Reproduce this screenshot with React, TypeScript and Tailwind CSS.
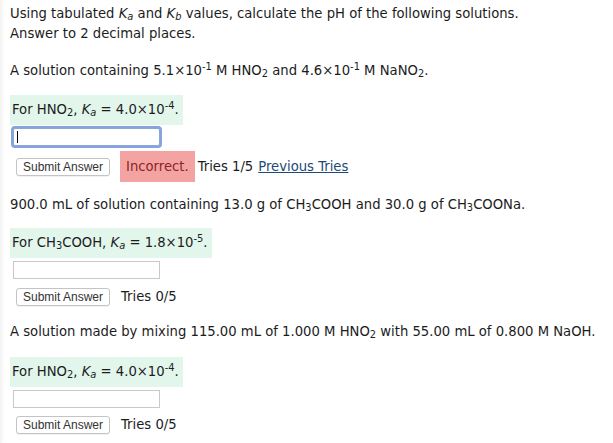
import React from "react";

const Ka = ({ sub = "a" }: { sub?: string }) => (
  <>
    <i>K</i>
    <sub>
      <i>{sub}</i>
    </sub>
  </>
);

const GivenBox = ({ children, className = "" }: { children: React.ReactNode; className?: string }) => (
  <div className={"flex " + className}>
    <div className="flex h-[30px] items-center bg-[#e2f6ec] pl-[2px] pr-[4px]">{children}</div>
  </div>
);

const AnswerInput = ({ focused = false }: { focused?: boolean }) => (
  <div className="relative mt-[3px] ml-[3px] w-[147px]">
    <input
      readOnly
      className={
        "block h-[18px] w-[147px] bg-white outline-none " +
        (focused
          ? "rounded-[2px] border border-[#8aa6dc] shadow-[0_0_0_2px_#86a3dc]"
          : "border border-[#c9c9c9]")
      }
    />
    {focused && <span className="absolute left-[4px] top-[3px] h-[12px] w-px bg-black" />}
  </div>
);

const SubmitButton = () => (
  <button className="ml-[6px] flex h-[18px] w-[94px] items-center justify-center rounded-[3px] border border-[#c4c4c4] bg-white text-[12px] text-[#333] font-['Liberation_Sans',Arial,sans-serif] shadow-[0_1px_0_rgba(0,0,0,0.05)]">
    Submit Answer
  </button>
);

export default function App() {
  return (
    <div className="min-h-[443px] bg-white pl-[10px] pt-[4px] text-[13.2px] leading-[20px] text-[#1c1c1c] font-['DejaVu_Sans',Verdana,sans-serif] shadow-[inset_4px_0_4px_-3px_rgba(0,0,0,0.08)]">
      <p>
        Using tabulated <Ka /> and <Ka sub="b" /> values, calculate the pH of the following solutions.
        <br />
        Answer to 2 decimal places.
      </p>

      {/* question 1 */}
      <p className="mt-[17px]">
        A solution containing 5.1×10<sup>-1</sup> M HNO<sub>2</sub> and 4.6×10<sup>-1</sup> M NaNO<sub>2</sub>.
      </p>
      <GivenBox className="mt-[14px]">
        <span>
          For HNO<sub>2</sub>, <Ka /> = 4.0×10<sup>-4</sup>.
        </span>
      </GivenBox>
      <AnswerInput focused />
      <div className="mt-[5px] flex h-[31px] items-center">
        <SubmitButton />
        <span className="ml-[10px] flex h-[31px] items-center bg-[#f4a3a3] px-[6px] text-[#8c2424]">Incorrect.</span>
        <span className="ml-[3px]">Tries 1/5</span>
        <a href="#" className="ml-[5px] text-[#1d4a78] underline">
          Previous Tries
        </a>
      </div>

      {/* question 2 */}
      <p className="mt-[13px]">
        900.0 mL of solution containing 13.0 g of CH<sub>3</sub>COOH and 30.0 g of CH<sub>3</sub>COONa.
      </p>
      <GivenBox className="mt-[13px]">
        <span>
          For CH<sub>3</sub>COOH, <Ka /> = 1.8×10<sup>-5</sup>.
        </span>
      </GivenBox>
      <AnswerInput />
      <div className="mt-[9px] flex h-[18px] items-center">
        <SubmitButton />
        <span className="ml-[11px]">Tries 0/5</span>
      </div>

      {/* question 3 */}
      <p className="mt-[16px]">
        A solution made by mixing 115.00 mL of 1.000 M HNO<sub>2</sub> with 55.00 mL of 0.800 M NaOH.
      </p>
      <GivenBox className="mt-[15px]">
        <span>
          For HNO<sub>2</sub>, <Ka /> = 4.0×10<sup>-4</sup>.
        </span>
      </GivenBox>
      <AnswerInput />
      <div className="mt-[8px] flex h-[18px] items-center">
        <SubmitButton />
        <span className="ml-[11px]">Tries 0/5</span>
      </div>
    </div>
  );
}
